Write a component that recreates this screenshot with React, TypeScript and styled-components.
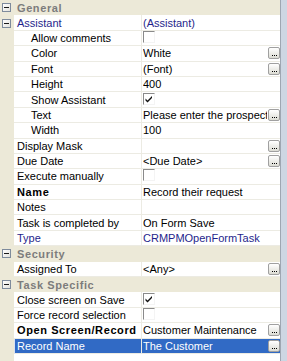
import styled, { createGlobalStyle, css } from "styled-components";

const GlobalStyle = createGlobalStyle`
  html, body {
    margin: 0;
    padding: 0;
    background: #ffffff;
  }
  body {
    font-family: "Liberation Sans", Arial, sans-serif;
    font-size: 11px;
  }
`;

type Prop = {
  label: string;
  value?: string;
  child?: boolean;
  bold?: boolean;
  blue?: boolean;
  check?: "on" | "off";
  button?: boolean;
  selected?: boolean;
  expander?: boolean;
};

type Item = { category: string } | Prop;

const items: Item[] = [
  { category: "General" },
  { label: "Assistant", value: "(Assistant)", blue: true, expander: true },
  { label: "Allow comments", child: true, check: "off" },
  { label: "Color", child: true, value: "White", button: true },
  { label: "Font", child: true, value: "(Font)", button: true },
  { label: "Height", child: true, value: "400" },
  { label: "Show Assistant", child: true, check: "on" },
  { label: "Text", child: true, value: "Please enter the prospect's", button: true },
  { label: "Width", child: true, value: "100" },
  { label: "Display Mask", button: true },
  { label: "Due Date", value: "<Due Date>", button: true },
  { label: "Execute manually", check: "off" },
  { label: "Name", value: "Record their request", bold: true },
  { label: "Notes" },
  { label: "Task is completed by", value: "On Form Save" },
  { label: "Type", value: "CRMPMOpenFormTask", blue: true },
  { category: "Security" },
  { label: "Assigned To", value: "<Any>", button: true },
  { category: "Task Specific" },
  { label: "Close screen on Save", check: "on" },
  { label: "Force record selection", check: "off" },
  { label: "Open Screen/Record", value: "Customer Maintenance", bold: true, button: true },
  { label: "Record Name", value: "The Customer", button: true, selected: true },
];

const ROW_H = "15.4px";

const Frame = styled.div`
  width: 287px;
  height: 361px;
  display: flex;
  overflow: hidden;
  background: #ffffff;
`;

const Grid = styled.div`
  width: 280px;
  display: flex;
  flex-direction: column;
  background: linear-gradient(to right, #ece9d8 14px, #ffffff 14px);
`;

const Edge = styled.div`
  width: 7px;
  border-left: 1px solid #9ea6b2;
  background: #cdd6e3;
`;

const CategoryRow = styled.div`
  height: ${ROW_H};
  display: flex;
  align-items: center;
  background: #ece9d8;
  box-sizing: border-box;
`;

const Gutter = styled.div`
  width: 14px;
  flex: none;
  height: 100%;
  display: flex;
  align-items: center;
  justify-content: center;
  background: #ece9d8;
`;

const Minus = styled.span`
  position: relative;
  width: 7px;
  height: 7px;
  margin-left: -2px;
  border: 1px solid #7e8b9c;
  background: linear-gradient(135deg, #ffffff, #e2e2dc);

  &::after {
    content: "";
    position: absolute;
    left: 1px;
    right: 1px;
    top: 3px;
    height: 1px;
    background: #1a1a1a;
  }
`;

const CategoryText = styled.span`
  padding-left: 3px;
  font-weight: bold;
  color: #7c7c7c;
  letter-spacing: 0.6px;
`;

const Row = styled.div`
  height: ${ROW_H};
  display: flex;
  box-sizing: border-box;
`;

const Cell = styled.div<{ $selected?: boolean }>`
  height: 100%;
  display: flex;
  align-items: center;
  box-sizing: border-box;
  border-bottom: 1px solid #ecebe3;
  white-space: nowrap;
  overflow: hidden;
  background: ${(p) => (p.$selected ? "#316ac5" : "#ffffff")};
`;

const LabelCell = styled(Cell)<{ $child?: boolean; $bold?: boolean; $blue?: boolean }>`
  width: 128px;
  flex: none;
  padding-left: ${(p) => (p.$child ? "17px" : "3px")};
  border-right: 1px solid #ecebe3;
  font-weight: ${(p) => (p.$bold ? "bold" : "normal")};
  letter-spacing: ${(p) => (p.$bold ? "0.6px" : "0")};
  color: ${(p) => (p.$selected ? "#ffffff" : p.$blue ? "#1f1f8c" : "#000000")};
  ${(p) =>
    p.$selected &&
    css`
      border-left: 1px solid #d8e2f2;
      padding-left: 2px;
    `}
`;

const ValueCell = styled(Cell)<{ $blue?: boolean }>`
  flex: 1;
  min-width: 0;
  padding-left: 1px;
  gap: 1px;
  color: ${(p) => (p.$selected ? "#ffffff" : p.$blue ? "#1f1f8c" : "#000000")};
`;

const ValueText = styled.span`
  flex: 1;
  min-width: 0;
  overflow: hidden;
  white-space: nowrap;
`;

const Box = styled.span`
  position: relative;
  flex: none;
  width: 12px;
  height: 12px;
  margin-top: -2px;
  box-sizing: border-box;
  border-top: 1px solid #8a8a8a;
  border-left: 1px solid #8a8a8a;
  border-right: 1px solid #f4f4f4;
  border-bottom: 1px solid #f4f4f4;
  background: #ffffff;
`;

const Spacer = styled.span`
  flex: 1;
`;

const Ellipsis = styled.span`
  flex: none;
  width: 12px;
  height: 12px;
  box-sizing: border-box;
  display: flex;
  align-items: flex-end;
  justify-content: center;
  gap: 1px;
  padding-bottom: 2px;
  border: 1px solid #a0a0a0;
  border-radius: 2px;
  background: linear-gradient(#ffffff, #dcdcd4);
`;

const Dot = styled.span`
  width: 1px;
  height: 1px;
  background: #000000;
`;

const Check = () => (
  <svg width="10" height="10" viewBox="0 0 10 10" style={{ position: "absolute", left: 0, top: 0 }}>
    <path d="M1.5 4.5 L3.5 6.5 L8 2 L8 4 L3.5 8.5 L1.5 6.5 Z" fill="#111111" />
  </svg>
);

const PropRow = ({ p }: { p: Prop }) => (
  <Row>
    <Gutter>{p.expander && <Minus />}</Gutter>
    <LabelCell $child={p.child} $bold={p.bold} $blue={p.blue} $selected={p.selected}>
      {p.label}
    </LabelCell>
    <ValueCell $blue={p.blue} $selected={p.selected}>
      {p.check ? (
        <>
          <Box>{p.check === "on" && <Check />}</Box>
          <Spacer />
        </>
      ) : (
        <ValueText>{p.value}</ValueText>
      )}
      {p.button && (
        <Ellipsis>
          <Dot />
          <Dot />
          <Dot />
        </Ellipsis>
      )}
    </ValueCell>
  </Row>
);

export default function App() {
  return (
    <>
      <GlobalStyle />
      <Frame>
        <Grid>
          {items.map((it, i) =>
            "category" in it ? (
              <CategoryRow key={i}>
                <Gutter>
                  <Minus />
                </Gutter>
                <CategoryText>{it.category}</CategoryText>
              </CategoryRow>
            ) : (
              <PropRow key={i} p={it} />
            )
          )}
        </Grid>
        <Edge />
      </Frame>
    </>
  );
}
